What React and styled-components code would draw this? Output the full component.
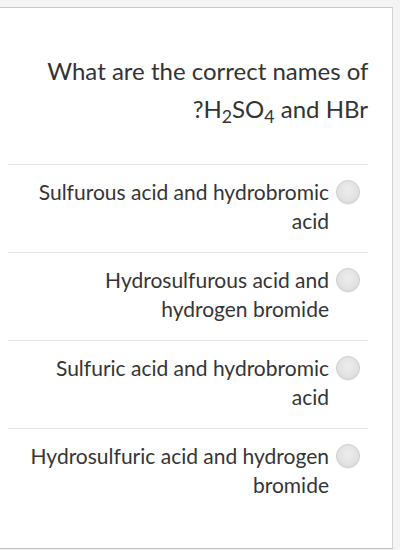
import React from "react";
import styled, { createGlobalStyle } from "styled-components";

const Global = createGlobalStyle`
  html, body { margin: 0; padding: 0; }
  body {
    width: 400px;
    height: 550px;
    overflow: hidden;
    background: #f4f4f4;
    font-family: Lato, "Open Sans", "Liberation Sans", sans-serif;
  }
`;

const Card = styled.div`
  box-sizing: border-box;
  margin-top: 7px;
  width: 393px;
  height: 542px;
  background: #ffffff;
  border-top: 1px solid #c9c9c9;
  border-right: 1px solid #d2d2d2;
  border-bottom: 1px solid #bdbdbd;
  padding: 0 24px 0 8px;
  direction: rtl;
`;

const Question = styled.p`
  margin: 0;
  padding: 44px 0 36px 0;
  font-size: 24px;
  line-height: 38px;
  color: #333333;
  text-align: start;
`;

const Sub = styled.sub`
  font-size: 0.74em;
  vertical-align: -0.28em;
  line-height: 0;
`;

const Options = styled.div`
  display: flex;
  flex-direction: column;
`;

const Row = styled.label`
  display: flex;
  align-items: flex-start;
  gap: 7px;
  border-top: 1px solid #e4e4e4;
  padding: 12px 8px 17px 12px;
  cursor: pointer;
`;

const Radio = styled.span`
  flex: 0 0 auto;
  box-sizing: border-box;
  width: 24px;
  height: 24px;
  margin-top: 3px;
  border-radius: 50%;
  border: 1px solid #cdcdcd;
  background: radial-gradient(circle at 50% 40%, #ececec 0%, #e2e2e2 60%, #d6d6d6 100%);
  box-shadow: 0 1px 1px rgba(0, 0, 0, 0.06);
`;

const OptionText = styled.span`
  font-size: 21px;
  line-height: 29px;
  color: #353535;
  text-align: start;
`;

const options = [
  "Sulfurous acid and hydrobromic acid",
  "Hydrosulfurous acid and hydrogen bromide",
  "Sulfuric acid and hydrobromic acid",
  "Hydrosulfuric acid and hydrogen bromide",
];

export default function App() {
  return (
    <>
      <Global />
      <Card>
        <Question>
          What are the correct names of H<Sub>2</Sub>SO<Sub>4</Sub> and HBr?
        </Question>
        <Options>
          {options.map((o) => (
            <Row key={o}>
              <Radio />
              <OptionText>{o}</OptionText>
            </Row>
          ))}
        </Options>
      </Card>
    </>
  );
}
